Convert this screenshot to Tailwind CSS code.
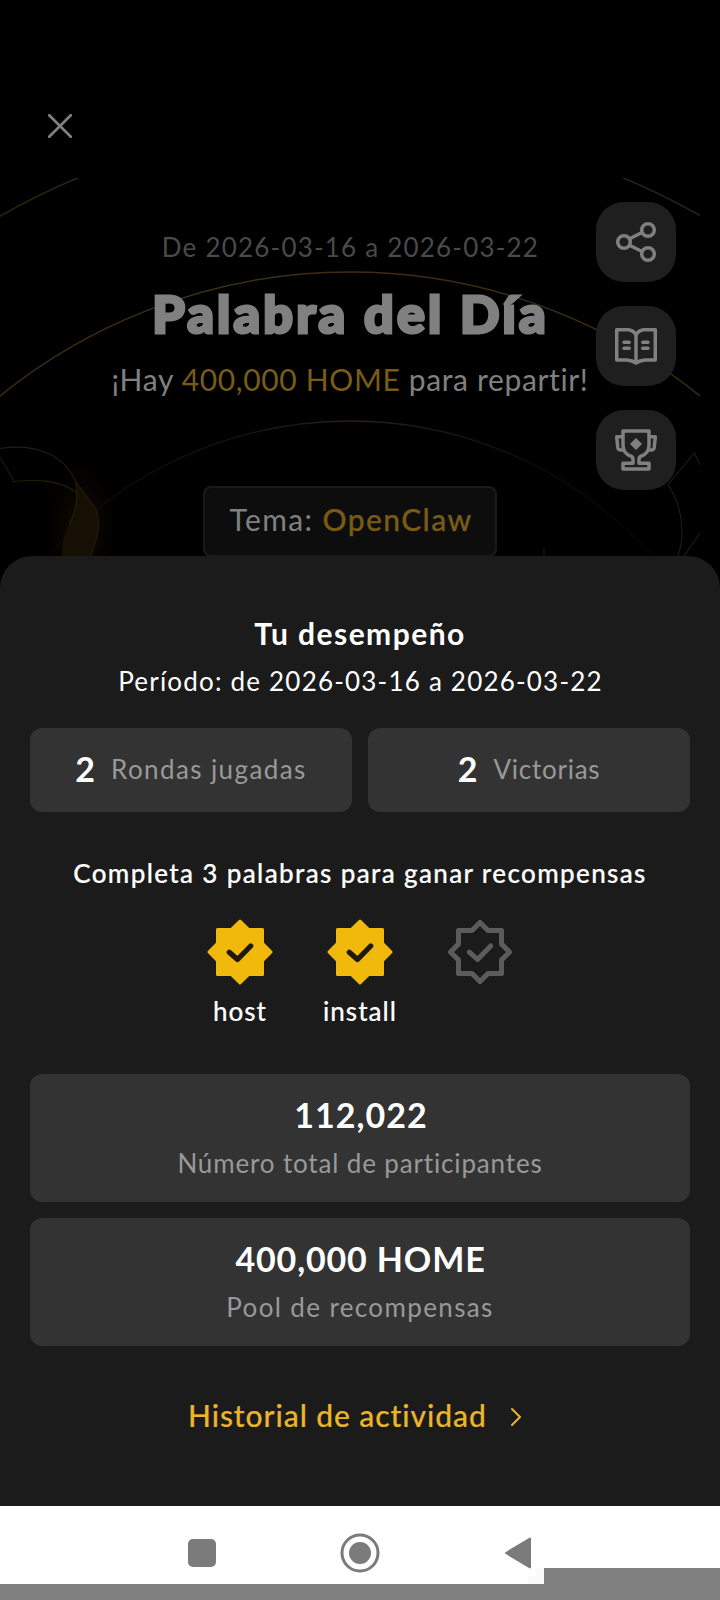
<!DOCTYPE html>
<html lang="es">
<head>
<meta charset="utf-8">
<title>Palabra del Día</title>
<script src="https://cdn.jsdelivr.net/npm/@tailwindcss/browser@4"></script>
</head>
<body class="bg-black">
<main class="relative flex h-[1600px] w-[720px] flex-col overflow-hidden bg-black font-['Lato','Open_Sans',sans-serif] text-white">

  <section class="relative flex h-[556px] shrink-0 flex-col">
    <svg class="absolute left-0 top-0" width="720" height="556" viewBox="0 0 720 556" fill="none">
      <defs>
        <clipPath id="stage"><rect x="0" y="178" width="700" height="378"/></clipPath>
        <linearGradient id="fade" gradientUnits="userSpaceOnUse" x1="50" y1="0" x2="650" y2="0">
          <stop offset="0" stop-color="#1c1507" stop-opacity=".3"/><stop offset=".5" stop-color="#2a2010"/><stop offset="1" stop-color="#1c1507" stop-opacity=".3"/>
        </linearGradient>
        <radialGradient id="glow" gradientUnits="userSpaceOnUse" cx="0" cy="0" r="1" gradientTransform="translate(82 525) scale(34 65)">
          <stop offset="0" stop-color="#100b02"/><stop offset=".5" stop-color="#080501"/><stop offset="1" stop-color="#000"/>
        </radialGradient>
      </defs>
      <g clip-path="url(#stage)">
        <rect x="40" y="455" width="80" height="101" fill="url(#glow)"/>
        <circle cx="350.500" cy="828" r="705" stroke="#33270f" stroke-width="1.3"/>
        <circle cx="350" cy="828" r="556" stroke="#3c2e14" stroke-width="1.4"/>
        <circle cx="350" cy="828" r="407" stroke="url(#fade)" stroke-width="1.3"/>
        <path d="M76 482L96 509Q101 524 96 540L91 556H62Q61 540 68 527C75 512 78 500 76 482Z" fill="#151003"/>
        <path d="M0 448.500C35 443 64 454 76 482L96 509Q101 524 96 540L91 556M0 457L14 481.500C38 479 58 480 77 492.500M76 482C78 500 76 512 69 525" stroke="#261c09" stroke-width="1.1"/>
        <path d="M700 465L694.500 453L668 484.500C680 503 684 524 681 545L678 556M700 533L684 556M544 548V556" stroke="#261c09" stroke-width="1.1"/>
      </g>
    </svg>

    <button class="relative ml-12 mt-[114px] size-6" aria-label="Cerrar">
      <svg width="24" height="24" viewBox="0 0 24 24" fill="none" stroke="#808080" stroke-width="2.700" stroke-linecap="round"><path d="M1.200 1.200L22.800 22.800M22.800 1.200L1.200 22.800"/></svg>
    </button>

    <div class="relative flex w-[700px] flex-col items-center whitespace-nowrap">
      <p class="mt-[91px] pl-px text-[26px]/9 tracking-[1.2px] text-[#4a4a4a]">De 2026-03-16 a 2026-03-22</p>
      <h1 class="mt-[18px] pl-px text-[52px]/[60px] font-black tracking-[3.2px] text-[#808080] [-webkit-text-stroke:3px_#808080]">Palabra del Día</h1>
      <p class="mt-4 text-[30px]/10 tracking-[0.65px] text-[#808080]">¡Hay <span class="text-[#785c16]">400,000 HOME</span> para repartir!</p>
      <div class="mt-[87px] flex h-[71px] w-[294px] justify-center rounded-lg border-2 border-[#1a1a1a] bg-[#0d0d0d] pl-0.5 pt-[11px] text-[30px]/10 tracking-[1.4px] text-[#808080]">
        <p>Tema: <span class="font-medium text-[#785c16] [-webkit-text-stroke:0.25px_#785c16]">OpenClaw</span></p>
      </div>
    </div>

    <nav class="absolute left-[596px] top-[202px] flex flex-col gap-6">
      <button class="flex size-20 items-center justify-center rounded-[28px] bg-[#1f1f1f]" aria-label="Compartir">
        <svg width="48" height="48" viewBox="0 0 48 48" fill="none" stroke="#808080" stroke-width="3.500"><circle cx="12" cy="24" r="6.300"/><circle cx="36" cy="12" r="6.300"/><circle cx="36" cy="36" r="6.300"/><path d="M17.600 20.700L30.500 14.200M17.600 27.300L30.500 33.800"/></svg>
      </button>
      <button class="flex size-20 items-center justify-center rounded-[28px] bg-[#1f1f1f]" aria-label="Reglas">
        <svg width="48" height="48" viewBox="0 0 48 48" fill="none" stroke="#808080" stroke-width="3.500" stroke-linejoin="round"><path d="M4.700 7.700H16.500Q22 8.500 24 13Q26 8.500 31.500 7.700H43.300V38H33Q27.500 38.500 24 41Q20.500 38.500 15 38H4.700ZM24 13V41"/><path d="M12 20.300H17.200M12 26.300H17.200M30.800 20.300H36M30.800 26.300H36" stroke-linecap="round"/></svg>
      </button>
      <button class="flex size-20 items-center justify-center rounded-[28px] bg-[#1f1f1f]" aria-label="Clasificación">
        <svg width="48" height="48" viewBox="0 0 48 48" fill="none" stroke="#808080" stroke-width="3.500" stroke-linejoin="round"><path d="M11 5H37V19C37 25 33.500 28.800 29.500 30Q27 30.800 27 33.300V37.300H37V43H11V37.300H21V33.300Q21 30.800 18.500 30C14.500 28.800 11 25 11 19Z"/><path d="M11 10.700H4.700L5.800 21.500Q6.200 24 9 24H12M37 10.700H43.300L42.200 21.500Q41.800 24 39 24H36"/><path d="M24 12L30 18L24 24L18 18Z" fill="#808080" stroke="none"/></svg>
      </button>
    </nav>
  </section>

  <section class="relative flex h-[950px] shrink-0 flex-col items-center whitespace-nowrap rounded-t-[32px] bg-[#1b1b1b] px-[30px] pt-[57px]">
    <h2 class="text-[30px]/10 font-bold tracking-[1.45px]">Tu desempeño</h2>
    <p class="mt-2.5 pl-px text-[26px]/9 tracking-[1.2px]">Período: de 2026-03-16 a 2026-03-22</p>

    <div class="mt-[29px] grid h-[84px] w-full grid-cols-2 gap-4">
      <div class="flex items-center justify-center gap-4 rounded-xl bg-[#333] pb-0.5"><span class="text-[34px]/10 font-bold">2</span><span class="text-[26px]/9 tracking-[1.4px] text-[#999]">Rondas jugadas</span></div>
      <div class="flex items-center justify-center gap-4 rounded-xl bg-[#333] pb-0.5"><span class="text-[34px]/10 font-bold">2</span><span class="text-[26px]/9 tracking-[0.75px] text-[#999]">Victorias</span></div>
    </div>

    <h3 class="mt-[43px] text-[26px]/9 font-medium tracking-[1.37px] [-webkit-text-stroke:0.2px_white]">Completa 3 palabras para ganar recompensas</h3>
    <ul class="mt-7 flex text-[26px]/9 font-medium tracking-[1px] [-webkit-text-stroke:0.1px_white]">
      <li class="flex w-[120px] flex-col items-center gap-2">
        <svg width="66" height="66" viewBox="0 0 66 66" fill="none" stroke-linejoin="round" stroke-linecap="round"><path d="M33 2L41.700 10.500H55.500V24.300L64 33L55.500 41.700V55.500H41.700L33 64L24.300 55.500H10.500V41.700L2 33L10.500 24.300V10.500H24.300Z" fill="#f0b90b" stroke="#f0b90b" stroke-width="3"/><path d="M22.300 33.200L30.500 40.500L43.700 27" stroke="#1f1a10" stroke-width="5.300"/></svg>
        <span>host</span>
      </li>
      <li class="flex w-[120px] flex-col items-center gap-2">
        <svg width="66" height="66" viewBox="0 0 66 66" fill="none" stroke-linejoin="round" stroke-linecap="round"><path d="M33 2L41.700 10.500H55.500V24.300L64 33L55.500 41.700V55.500H41.700L33 64L24.300 55.500H10.500V41.700L2 33L10.500 24.300V10.500H24.300Z" fill="#f0b90b" stroke="#f0b90b" stroke-width="3"/><path d="M22.300 33.200L30.500 40.500L43.700 27" stroke="#1f1a10" stroke-width="5.300"/></svg>
        <span>install</span>
      </li>
      <li class="flex w-[120px] flex-col items-center">
        <svg width="66" height="66" viewBox="0 0 66 66" fill="none" stroke="#5c5c5c" stroke-width="5" stroke-linejoin="round" stroke-linecap="round"><path d="M33 3.500L41 11.500H54.500V25L62.500 33L54.500 41V54.500H41L33 62.500L25 54.500H11.500V41L3.500 33L11.500 25V11.500H25Z"/><path d="M22.300 33.200L30.500 40.500L43.700 27"/></svg>
      </li>
    </ul>

    <div class="mt-[45px] flex w-full flex-col gap-4 text-center">
      <div class="h-32 rounded-xl bg-[#333] pt-[21px]"><p class="pl-0.5 text-[34px]/10 font-bold tracking-[1px]">112,022</p><p class="mt-2.5 text-[26px]/9 tracking-[0.85px] text-[#999]">Número total de participantes</p></div>
      <div class="h-32 rounded-xl bg-[#333] pt-[21px]"><p class="pl-px text-[34px]/10 font-bold tracking-[0.85px]">400,000 HOME</p><p class="mt-2.5 text-[26px]/9 tracking-[1.37px] text-[#999]">Pool de recompensas</p></div>
    </div>

    <a class="mt-[49px] flex items-center gap-[22px] self-start pl-[158px] text-[30px]/10 font-medium tracking-[0.93px] text-[#ebb52a] [-webkit-text-stroke:0.15px_#ebb52a]"><span>Historial de actividad</span>
      <svg class="mt-1" width="14" height="20" viewBox="0 0 14 20" fill="none" stroke="#ebb52a" stroke-width="2" stroke-linecap="round" stroke-linejoin="round"><path d="M3 2L11 10L3 18"/></svg>
    </a>
  </section>

  <footer class="relative flex h-[94px] shrink-0 flex-col bg-white">
    <div class="relative flex h-[78px] items-center pl-[188px] pt-4">
      <span class="size-7 rounded-[5px] bg-[#7b7b7b]"></span>
      <svg class="ml-[124px]" width="40" height="40" viewBox="0 0 40 40" fill="none"><circle cx="20" cy="20" r="18" stroke="#7b7b7b" stroke-width="3"/><circle cx="20" cy="20" r="11" fill="#7b7b7b"/></svg>
      <svg class="ml-[123px]" width="30" height="34" viewBox="0 0 30 34"><path d="M27 2.500V31.500L3 17Z" fill="#7b7b7b" stroke="#7b7b7b" stroke-width="2" stroke-linejoin="round"/></svg>
    </div>
    <div class="h-4 bg-[#808080]"></div>
    <div class="absolute right-0 top-[62px] h-4 w-44 bg-[#808080]"></div>
    <div class="absolute left-[536px] top-[62px] size-2 bg-[#fafafa]"></div>
    <div class="absolute left-[528px] top-[70px] h-2 w-4 bg-[#fafafa]"></div>
  </footer>
</main>
</body>
</html>
